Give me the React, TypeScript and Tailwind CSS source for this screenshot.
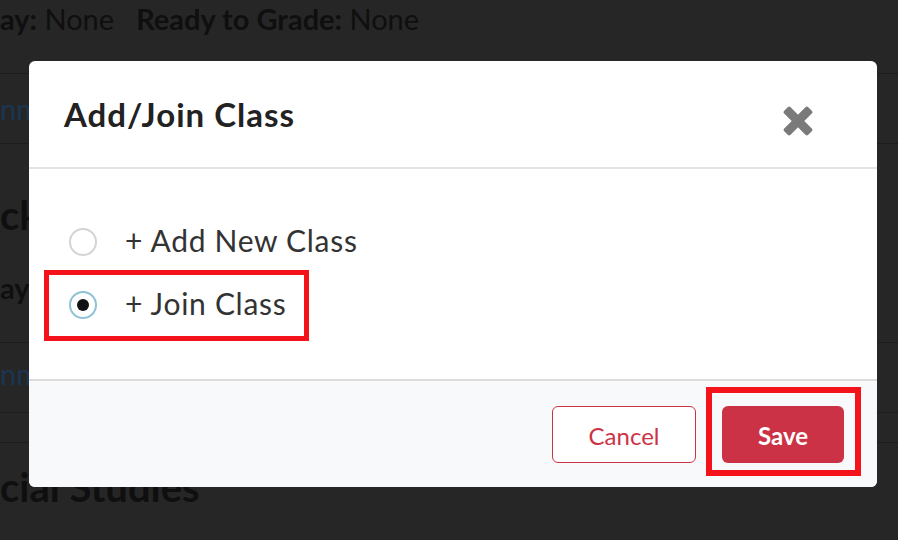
import { useState } from "react"

const font = { fontFamily: "Lato, 'Open Sans', sans-serif" }

function Radio({ checked }: { checked: boolean }) {
  return (
    <span
      className={
        "flex h-[28px] w-[28px] shrink-0 items-center justify-center rounded-full border-2 bg-white " +
        (checked ? "border-[#8fc3d6]" : "border-[#d4d4d4]")
      }
    >
      {checked && <span className="h-[12px] w-[12px] rounded-full bg-[#111]" />}
    </span>
  )
}

function CloseIcon() {
  return (
    <svg width="30" height="30" viewBox="0 0 30 30">
      <g fill="#7a7a7a">
        <rect x="-2" y="10.5" width="34" height="9" rx="2" transform="rotate(45 15 15)" />
        <rect x="-2" y="10.5" width="34" height="9" rx="2" transform="rotate(-45 15 15)" />
      </g>
    </svg>
  )
}

export default function App() {
  const [choice, setChoice] = useState("join")

  return (
    <div className="relative h-[540px] w-[898px] overflow-hidden bg-[#262626]" style={font}>
      {/* dimmed page behind */}
      <div className="flex flex-col text-[#0f0f0f]">
        <div className="flex h-[73px] gap-[22px] pt-[2px] text-[29px] leading-[34px]">
          <span>
            <b>ay:</b> None
          </span>
          <span>
            <b>Ready to Grade:</b> None
          </span>
        </div>
        <div className="h-px bg-[#1c1c1c]" />
        <div className="flex h-[69px] items-center text-[29px] text-[#1c3552]">nm</div>
        <div className="h-px bg-[#1c1c1c]" />
        <div className="flex h-[110px] items-center pt-[32px] text-[40px] font-bold">ck</div>
        <div className="flex h-[88px] items-start pt-[12px] text-[29px] font-bold">ay:</div>
        <div className="h-px bg-[#1c1c1c]" />
        <div className="flex h-[69px] items-center pb-[8px] text-[29px] text-[#1c3552]">nm</div>
        <div className="h-px bg-[#1c1c1c]" />
        <div className="h-[29px]" />
        <div className="h-px bg-[#1c1c1c]" />
        <div className="pt-[20px] text-[40px] font-bold leading-[48px]">cial Studies</div>
      </div>

      {/* modal */}
      <div className="absolute left-[29px] top-[61px] flex h-[426px] w-[848px] flex-col overflow-hidden rounded-[6px] bg-white">
        <div className="flex h-[108px] shrink-0 items-center justify-between border-b-2 border-[#e3e3e3] pl-[35px] pr-[64px]">
          <h2 className="pt-[2px] text-[33px] font-bold tracking-[1px] text-[#222]">Add/Join Class</h2>
          <button className="mt-[14px]">
            <CloseIcon />
          </button>
        </div>

        <div className="flex flex-1 flex-col gap-[33px] pl-[40px] pt-[58px]">
          <label className="flex h-[30px] cursor-pointer items-center gap-[28px]" onClick={() => setChoice("add")}>
            <Radio checked={choice === "add"} />
            <span className="-mt-[5px] text-[30px] leading-[30px] tracking-[0.7px] text-[#333]">+ Add New Class</span>
          </label>
          <label className="flex h-[30px] cursor-pointer items-center gap-[28px]" onClick={() => setChoice("join")}>
            <Radio checked={choice === "join"} />
            <span className="-mt-[5px] text-[30px] leading-[30px] tracking-[0.7px] text-[#333]">+ Join Class</span>
          </label>
        </div>

        <div className="flex h-[108px] shrink-0 items-center justify-end gap-[26px] border-t-2 border-[#dcdcdc] bg-[#f8f9fb] pr-[33px]">
          <button className="h-[57px] w-[144px] rounded-[6px] border-[1.5px] border-[#cc3446] bg-white pt-[4px] text-[24px] text-[#cc3446]">
            Cancel
          </button>
          <button className="h-[57px] w-[122px] rounded-[6px] bg-[#cc3245] pt-[4px] text-[24px] font-bold text-white">
            Save
          </button>
        </div>

        {/* annotation boxes */}
        <div className="pointer-events-none absolute left-[15px] top-[209px] h-[71px] w-[265px] border-[5px] border-[#f4121b]" />
        <div className="pointer-events-none absolute left-[677px] top-[326px] h-[89px] w-[155px] border-[6px] border-[#f4121b]" />
      </div>
    </div>
  )
}
